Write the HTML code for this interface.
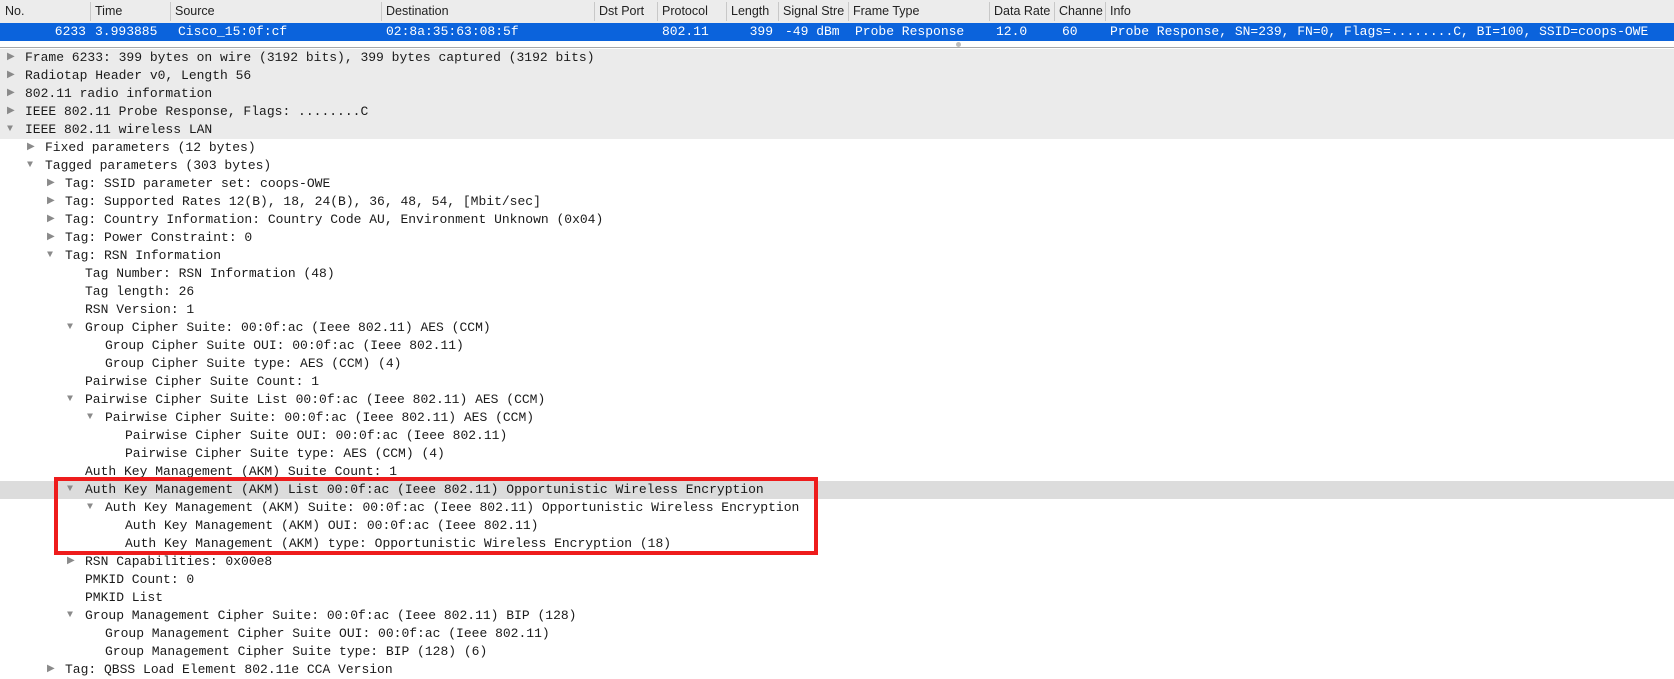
<!DOCTYPE html>
<html><head><meta charset="utf-8"><style>
*{margin:0;padding:0;box-sizing:border-box}
body{width:1674px;height:667px;overflow:hidden;background:#fff;position:relative;font-family:"Liberation Mono",monospace;}
.hdr{position:absolute;left:0;top:0;width:1674px;height:23px;background:#ececec;font-family:"Liberation Sans",sans-serif;font-size:12.5px;color:#222}
.hdr span{position:absolute;top:4px;white-space:nowrap}
.hdr i{position:absolute;top:2px;width:1px;height:19px;background:#c8c8c8}
.sel{position:absolute;left:0;top:23px;width:1674px;height:18px;background:#0b63dc;color:#fff;font-size:13px}
.sel span{position:absolute;top:1px;white-space:nowrap}
.sep{position:absolute;left:0;top:47px;width:1674px;height:1px;background:#a8a8a8}
.dot{position:absolute;left:956px;top:42px;width:5px;height:5px;border-radius:50%;background:#bbb}
.r{position:absolute;left:0;width:1674px;height:18px;font-size:13px;color:#1a1a1a;white-space:nowrap;line-height:18px}
.r.g{background:#ebebeb}
.r.h{background:#dcdcdc}
.r b{font-weight:normal;position:absolute;top:0}
.r em{position:absolute;top:0;font-style:normal;color:#8a8a8a;font-size:10px}
.box{position:absolute;left:54px;top:477px;width:764px;height:78px;border:4px solid #ee1c1c}
</style></head><body>
<div class="hdr">
<span style="left:5px">No.</span><i style="left:90px"></i>
<span style="left:95px">Time</span><i style="left:170px"></i>
<span style="left:175px">Source</span><i style="left:381px"></i>
<span style="left:386px">Destination</span><i style="left:594px"></i>
<span style="left:599px">Dst Port</span><i style="left:657px"></i>
<span style="left:662px">Protocol</span><i style="left:726px"></i>
<span style="left:731px">Length</span><i style="left:778px"></i>
<span style="left:783px">Signal Stre</span><i style="left:848px"></i>
<span style="left:853px">Frame Type</span><i style="left:989px"></i>
<span style="left:994px">Data Rate</span><i style="left:1054px"></i>
<span style="left:1059px">Channe</span><i style="left:1105px"></i>
<span style="left:1110px">Info</span>
</div>
<div class="sel">
<span style="right:1588px">6233</span>
<span style="left:95px">3.993885</span>
<span style="left:178px">Cisco_15:0f:cf</span>
<span style="left:386px">02:8a:35:63:08:5f</span>
<span style="left:662px">802.11</span>
<span style="right:901px">399</span>
<span style="left:785px">-49 dBm</span>
<span style="left:855px">Probe Response</span>
<span style="left:996px">12.0</span>
<span style="left:1062px">60</span>
<span style="left:1110px">Probe Response, SN=239, FN=0, Flags=........C, BI=100, SSID=coops-OWE</span>
</div>
<div class="sep"></div><div class="dot"></div>
<div class="r g" style="top:49px"><em style="left:7px">▶</em><b style="left:25px">Frame 6233: 399 bytes on wire (3192 bits), 399 bytes captured (3192 bits)</b></div>
<div class="r g" style="top:67px"><em style="left:7px">▶</em><b style="left:25px">Radiotap Header v0, Length 56</b></div>
<div class="r g" style="top:85px"><em style="left:7px">▶</em><b style="left:25px">802.11 radio information</b></div>
<div class="r g" style="top:103px"><em style="left:7px">▶</em><b style="left:25px">IEEE 802.11 Probe Response, Flags: ........C</b></div>
<div class="r g" style="top:121px"><em style="left:7px">▼</em><b style="left:25px">IEEE 802.11 wireless LAN</b></div>
<div class="r" style="top:139px"><em style="left:27px">▶</em><b style="left:45px">Fixed parameters (12 bytes)</b></div>
<div class="r" style="top:157px"><em style="left:27px">▼</em><b style="left:45px">Tagged parameters (303 bytes)</b></div>
<div class="r" style="top:175px"><em style="left:47px">▶</em><b style="left:65px">Tag: SSID parameter set: coops-OWE</b></div>
<div class="r" style="top:193px"><em style="left:47px">▶</em><b style="left:65px">Tag: Supported Rates 12(B), 18, 24(B), 36, 48, 54, [Mbit/sec]</b></div>
<div class="r" style="top:211px"><em style="left:47px">▶</em><b style="left:65px">Tag: Country Information: Country Code AU, Environment Unknown (0x04)</b></div>
<div class="r" style="top:229px"><em style="left:47px">▶</em><b style="left:65px">Tag: Power Constraint: 0</b></div>
<div class="r" style="top:247px"><em style="left:47px">▼</em><b style="left:65px">Tag: RSN Information</b></div>
<div class="r" style="top:265px"><b style="left:85px">Tag Number: RSN Information (48)</b></div>
<div class="r" style="top:283px"><b style="left:85px">Tag length: 26</b></div>
<div class="r" style="top:301px"><b style="left:85px">RSN Version: 1</b></div>
<div class="r" style="top:319px"><em style="left:67px">▼</em><b style="left:85px">Group Cipher Suite: 00:0f:ac (Ieee 802.11) AES (CCM)</b></div>
<div class="r" style="top:337px"><b style="left:105px">Group Cipher Suite OUI: 00:0f:ac (Ieee 802.11)</b></div>
<div class="r" style="top:355px"><b style="left:105px">Group Cipher Suite type: AES (CCM) (4)</b></div>
<div class="r" style="top:373px"><b style="left:85px">Pairwise Cipher Suite Count: 1</b></div>
<div class="r" style="top:391px"><em style="left:67px">▼</em><b style="left:85px">Pairwise Cipher Suite List 00:0f:ac (Ieee 802.11) AES (CCM)</b></div>
<div class="r" style="top:409px"><em style="left:87px">▼</em><b style="left:105px">Pairwise Cipher Suite: 00:0f:ac (Ieee 802.11) AES (CCM)</b></div>
<div class="r" style="top:427px"><b style="left:125px">Pairwise Cipher Suite OUI: 00:0f:ac (Ieee 802.11)</b></div>
<div class="r" style="top:445px"><b style="left:125px">Pairwise Cipher Suite type: AES (CCM) (4)</b></div>
<div class="r" style="top:463px"><b style="left:85px">Auth Key Management (AKM) Suite Count: 1</b></div>
<div class="r h" style="top:481px"><em style="left:67px">▼</em><b style="left:85px">Auth Key Management (AKM) List 00:0f:ac (Ieee 802.11) Opportunistic Wireless Encryption</b></div>
<div class="r" style="top:499px"><em style="left:87px">▼</em><b style="left:105px">Auth Key Management (AKM) Suite: 00:0f:ac (Ieee 802.11) Opportunistic Wireless Encryption</b></div>
<div class="r" style="top:517px"><b style="left:125px">Auth Key Management (AKM) OUI: 00:0f:ac (Ieee 802.11)</b></div>
<div class="r" style="top:535px"><b style="left:125px">Auth Key Management (AKM) type: Opportunistic Wireless Encryption (18)</b></div>
<div class="r" style="top:553px"><em style="left:67px">▶</em><b style="left:85px">RSN Capabilities: 0x00e8</b></div>
<div class="r" style="top:571px"><b style="left:85px">PMKID Count: 0</b></div>
<div class="r" style="top:589px"><b style="left:85px">PMKID List</b></div>
<div class="r" style="top:607px"><em style="left:67px">▼</em><b style="left:85px">Group Management Cipher Suite: 00:0f:ac (Ieee 802.11) BIP (128)</b></div>
<div class="r" style="top:625px"><b style="left:105px">Group Management Cipher Suite OUI: 00:0f:ac (Ieee 802.11)</b></div>
<div class="r" style="top:643px"><b style="left:105px">Group Management Cipher Suite type: BIP (128) (6)</b></div>
<div class="r" style="top:661px"><em style="left:47px">▶</em><b style="left:65px">Tag: QBSS Load Element 802.11e CCA Version</b></div>
<div class="box"></div>
</body></html>
